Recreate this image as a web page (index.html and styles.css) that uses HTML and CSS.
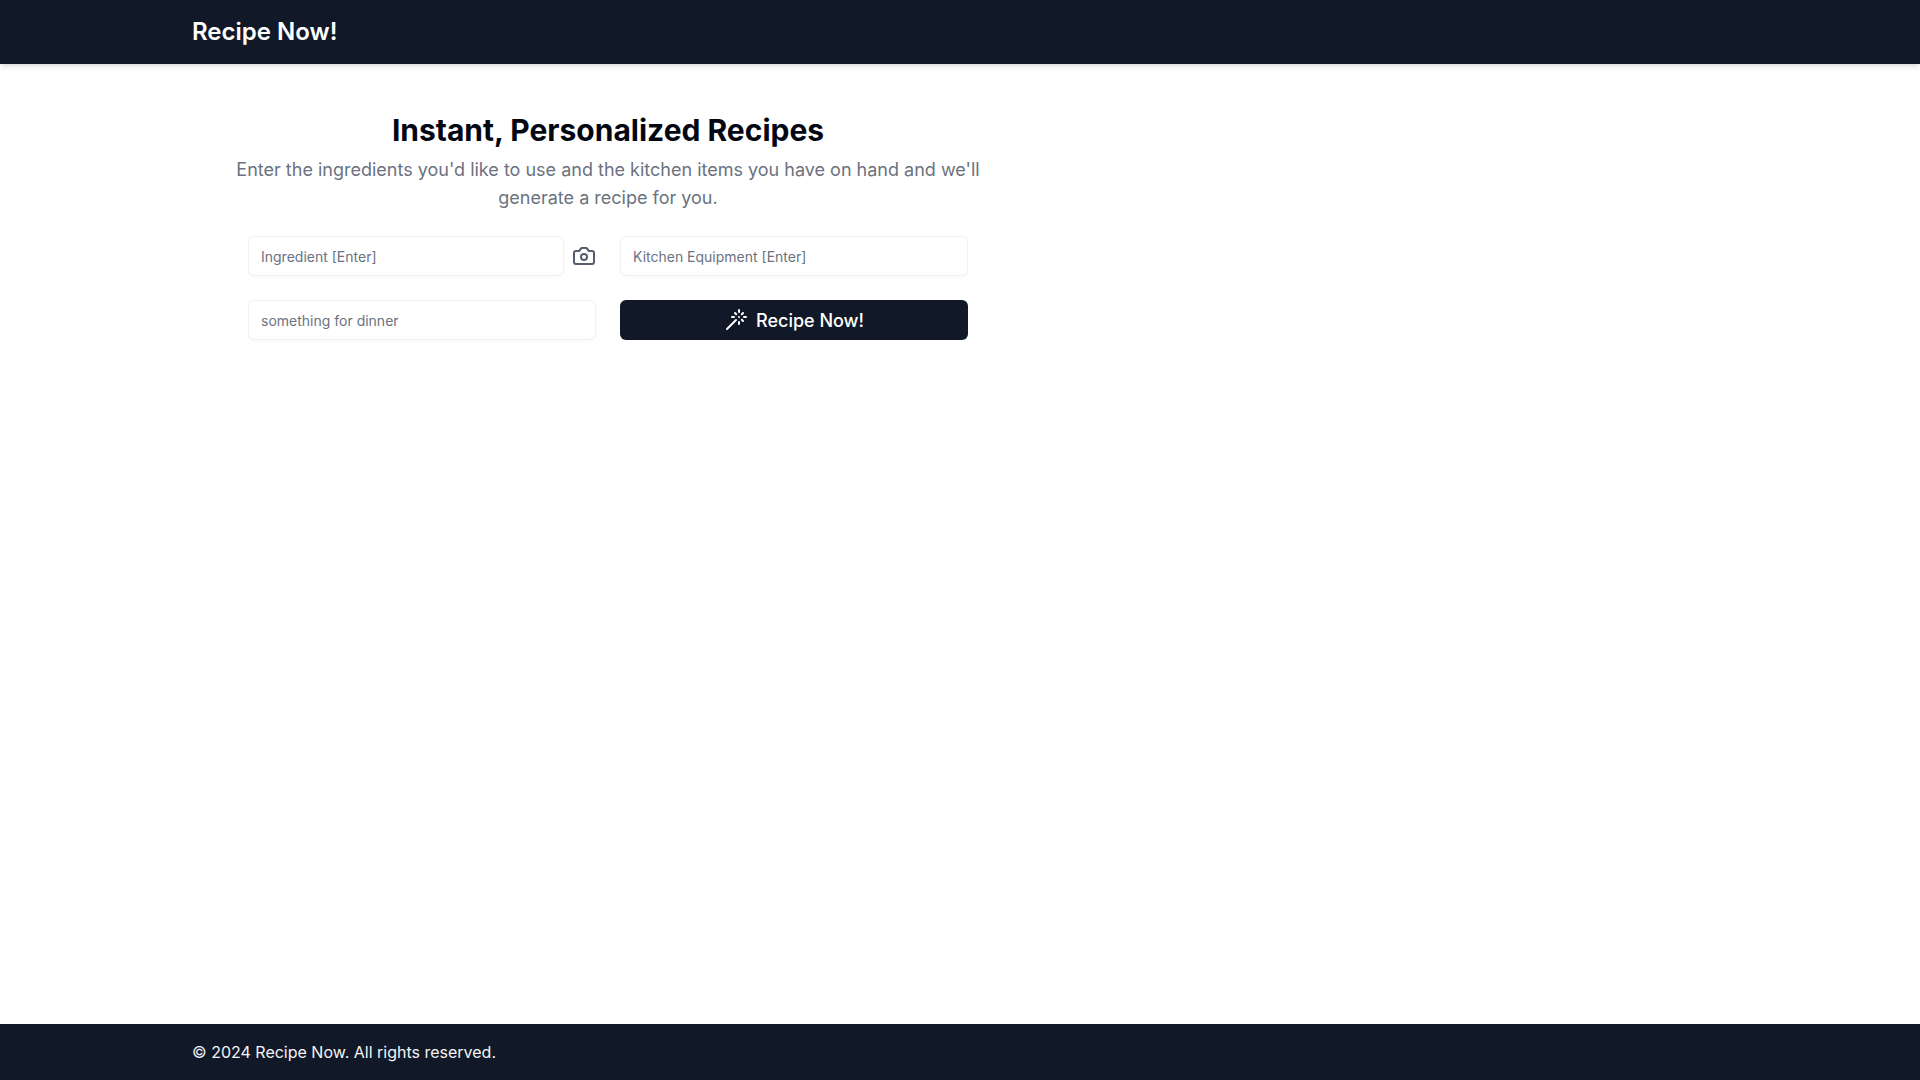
FILE: index.html
```html
<!DOCTYPE html>
<html lang="en">
<head>
  <meta charset="UTF-8" />
  <meta name="viewport" content="width=device-width, initial-scale=1.0" />
  <title>Recipe Now!</title>
  <link rel="stylesheet" href="styles.css">
</head>
<body>

  <header class="site-header">
    <div class="container">
      <a class="logo" href="#">Recipe Now!</a>
    </div>
  </header>

  <main class="container">
    <section class="recipe-panel">
      <div class="intro">
        <h1>Instant, Personalized Recipes</h1>
        <p>Enter the ingredients you'd like to use and the kitchen items you have on hand and we'll generate a recipe for you.</p>
      </div>

      <form class="recipe-form">
        <div class="ingredient-field">
          <input type="text" placeholder="Ingredient [Enter]">
          <svg class="camera-icon" width="24" height="24" viewBox="0 0 24 24" fill="none" stroke="currentColor" stroke-width="2" stroke-linecap="round" stroke-linejoin="round">
            <path d="M14.5 4h-5L7 7H4a2 2 0 0 0-2 2v9a2 2 0 0 0 2 2h16a2 2 0 0 0 2-2V9a2 2 0 0 0-2-2h-3l-2.5-3z"/>
            <circle cx="12" cy="13" r="3"/>
          </svg>
        </div>
        <input type="text" placeholder="Kitchen Equipment [Enter]">
        <input type="text" placeholder="something for dinner">
        <button type="button" class="submit-btn">
          <svg width="24" height="24" viewBox="0 0 24 24" fill="none" stroke="currentColor" stroke-width="2" stroke-linecap="round" stroke-linejoin="round">
            <path d="M15 4V2"/>
            <path d="M15 16v-2"/>
            <path d="M8 9h2"/>
            <path d="M20 9h2"/>
            <path d="M17.8 11.8 19 13"/>
            <path d="M15 9h.01"/>
            <path d="M17.8 6.2 19 5"/>
            <path d="m3 21 9-9"/>
            <path d="M12.2 6.2 11 5"/>
          </svg>
          Recipe Now!
        </button>
      </form>
    </section>
  </main>

  <footer class="site-footer">
    <div class="container">
      <p>© 2024 Recipe Now. All rights reserved.</p>
    </div>
  </footer>

</body>
</html>
```

FILE: styles.css
```css
* {
  box-sizing: border-box;
}

body {
  margin: 0;
  min-height: 100vh;
  display: flex;
  flex-direction: column;
  font-family: 'Inter', sans-serif;
  background: #fff;
  color: #030712;
}

.container {
  width: 1536px;
  margin: 0 auto;
}

.site-header {
  height: 64px;
  display: flex;
  align-items: center;
  background: #111827;
  box-shadow: 0 4px 6px -1px rgba(0, 0, 0, 0.1), 0 2px 4px -2px rgba(0, 0, 0, 0.1);
}

.logo {
  font-size: 24px;
  line-height: 32px;
  font-weight: 600;
  color: #fff;
  text-decoration: none;
}

main {
  flex: 1;
}

.recipe-panel {
  width: 832px;
  padding: 48px 56px 0;
}

.intro {
  margin: 0 -24px 24px;
  text-align: center;
}

.intro h1 {
  margin: 0 0 8px;
  font-size: 30px;
  line-height: 36px;
  font-weight: 700;
}

.intro p {
  margin: 0;
  font-size: 18px;
  line-height: 28px;
  color: #6b7280;
}

.recipe-form {
  display: grid;
  grid-template-columns: 1fr 1fr;
  gap: 24px;
}

.ingredient-field {
  display: flex;
  align-items: center;
  gap: 8px;
}

.recipe-form input {
  width: 100%;
  min-width: 0;
  height: 40px;
  padding: 8px 12px;
  border: 1px solid #eef0f2;
  border-radius: 6px;
  box-shadow: 0 1px 2px rgba(0, 0, 0, 0.03);
  font-family: 'Inter', sans-serif;
  font-size: 14px;
  color: #111827;
  background: #fff;
}

.recipe-form input::placeholder {
  color: #6b7280;
  opacity: 1;
}

.camera-icon {
  flex-shrink: 0;
  color: #565e6b;
}

.submit-btn {
  height: 40px;
  display: flex;
  align-items: center;
  justify-content: center;
  gap: 8px;
  border: none;
  border-radius: 6px;
  background: #111827;
  color: #fff;
  font-family: 'Inter', sans-serif;
  font-size: 18px;
  font-weight: 500;
  cursor: pointer;
}

.site-footer {
  height: 56px;
  display: flex;
  align-items: center;
  background: #111827;
  color: #f3f4f6;
}

.site-footer p {
  margin: 0;
  font-size: 16px;
  line-height: 24px;
}
```
